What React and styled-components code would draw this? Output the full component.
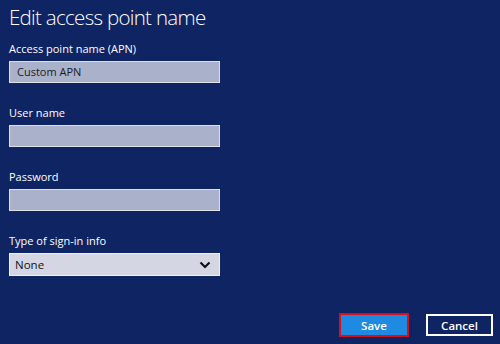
import React from "react";
import styled, { createGlobalStyle } from "styled-components";

const GlobalStyle = createGlobalStyle`
  html, body {
    margin: 0;
    padding: 0;
    background: #0f2463;
  }
  * {
    box-sizing: border-box;
  }
`;

const fields = [
  { label: "Access point name (APN)", value: "Custom APN" },
  { label: "User name", value: "" },
  { label: "Password", value: "" },
];

const App = () => {
  return (
    <Page>
      <GlobalStyle />
      <Title>Edit access point name</Title>
      <Form>
        {fields.map((f) => (
          <Field key={f.label}>
            <Label>{f.label}</Label>
            <TextBox>{f.value}</TextBox>
          </Field>
        ))}
        <Field>
          <Label>Type of sign-in info</Label>
          <Select>
            <span>None</span>
            <svg width="12" height="8" viewBox="0 0 12 8">
              <polyline
                points="1.5,1.5 6,6 10.5,1.5"
                fill="none"
                stroke="#111"
                strokeWidth="2.2"
              />
            </svg>
          </Select>
        </Field>
      </Form>
      <Footer>
        <Button primary>Save</Button>
        <Button>Cancel</Button>
      </Footer>
    </Page>
  );
};

const Page = styled.div`
  width: 500px;
  height: 344px;
  display: flex;
  flex-direction: column;
  padding: 0 7px 7px 9px;
  font-family: "Open Sans", "Liberation Sans", sans-serif;
  color: #ffffff;
`;

const Title = styled.h1`
  margin: 2px 0 0 0;
  font-size: 20.5px;
  line-height: 30px;
  font-weight: 300;
  letter-spacing: -0.7px;
`;

const Form = styled.div`
  display: flex;
  flex-direction: column;
  margin-top: 8.5px;
`;

const Field = styled.div`
  display: flex;
  flex-direction: column;
  margin-bottom: 21.5px;
`;

const Label = styled.div`
  font-size: 11px;
  line-height: 16px;
  margin-bottom: 4.5px;
`;

const TextBox = styled.div`
  width: 211px;
  height: 22px;
  background: #aab2cb;
  border: 1px solid #dde0ea;
  color: #1b1b1b;
  font-size: 11px;
  line-height: 20px;
  padding-left: 7px;
`;

const Select = styled.div`
  width: 211px;
  height: 23px;
  background: #d4d7e3;
  border: 1px solid #eef0f5;
  color: #111111;
  font-size: 11.5px;
  display: flex;
  align-items: center;
  justify-content: space-between;
  padding: 0 8px 0 5px;
`;

const Footer = styled.div`
  margin-top: auto;
  display: flex;
  justify-content: flex-end;
  align-items: center;
  gap: 17px;
`;

const Button = styled.button`
  font-family: "Open Sans", "Liberation Sans", sans-serif;
  font-size: 11.5px;
  font-weight: 600;
  color: #ffffff;
  padding: 0;
  width: ${(p) => (p.primary ? "70px" : "67px")};
  height: ${(p) => (p.primary ? "24px" : "22px")};
  background: ${(p) => (p.primary ? "#1f8ae2" : "#0f2463")};
  border: 2px solid ${(p) => (p.primary ? "#d6101c" : "#ffffff")};
`;

export default App;
